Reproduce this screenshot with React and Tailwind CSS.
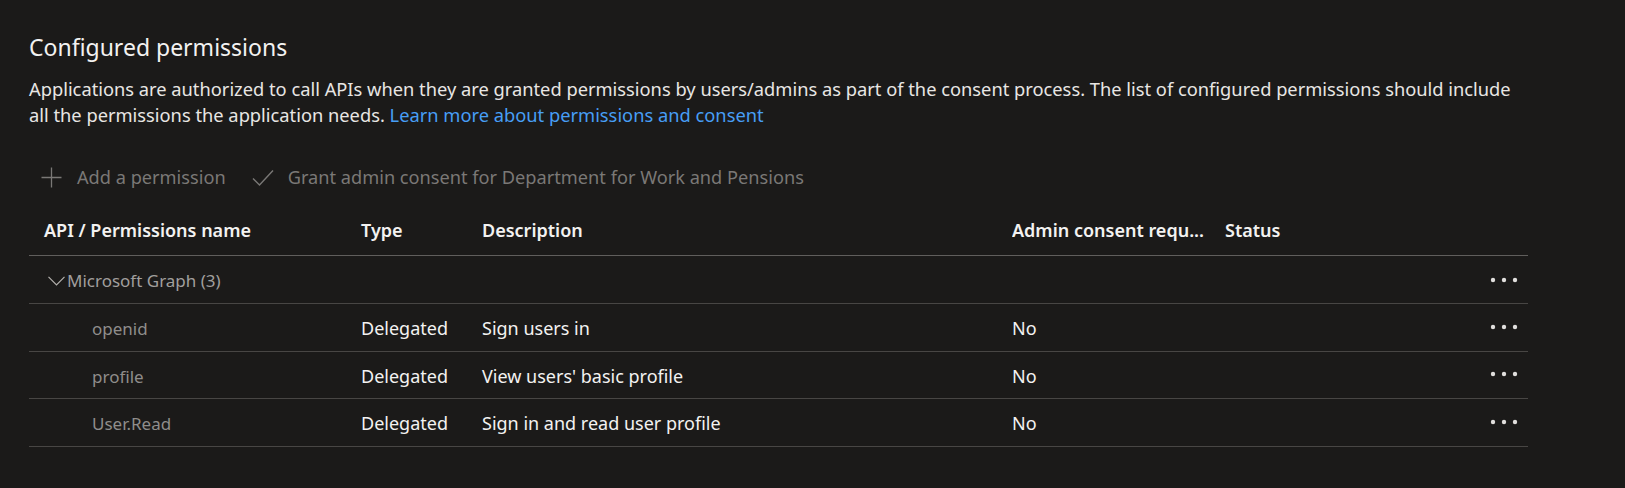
import React from 'react';

const font = { fontFamily: '"Noto Sans", "Open Sans", sans-serif' };

function Dots() {
  return (
    <svg width="28" height="6" viewBox="0 0 28 6" className="text-[#e1dfdd]">
      <circle cx="3" cy="3" r="2.2" fill="currentColor" />
      <circle cx="14" cy="3" r="2.2" fill="currentColor" />
      <circle cx="25" cy="3" r="2.2" fill="currentColor" />
    </svg>
  );
}

const rows = [
  { name: 'openid', type: 'Delegated', desc: 'Sign users in', admin: 'No' },
  { name: 'profile', type: 'Delegated', desc: "View users' basic profile", admin: 'No' },
  { name: 'User.Read', type: 'Delegated', desc: 'Sign in and read user profile', admin: 'No' },
];

const grid = 'grid grid-cols-[332px_121px_530px_213px_1fr_48px] items-center';

export default function App() {
  return (
    <div className="min-h-[488px] w-full bg-[#1b1a19] text-[#f3f2f1] pl-[29px] pr-[97px] pt-[31px]" style={font}>
      {/* Title */}
      <h2 className="text-[23px] leading-[32px] text-[#f3f2f1]">Configured permissions</h2>

      {/* Description */}
      <p className="mt-[13px] text-[18.3px] leading-[26px] text-[#e8e6e4]">
        Applications are authorized to call APIs when they are granted permissions by users/admins as part of the consent process. The list of configured permissions should include
        <br />
        all the permissions the application needs.{' '}
        <span className="text-[#479ef5]">Learn more about permissions and consent</span>
      </p>

      {/* Toolbar */}
      <div className="mt-[34px] flex h-[32px] items-center text-[18.2px] text-[#7a7876]">
        <div className="flex items-center pl-[12px]">
          <svg width="21" height="21" viewBox="0 0 21 21" className="mr-[15px]">
            <path d="M10.5 0.5v20M0.5 10.5h20" stroke="currentColor" strokeWidth="1.3" fill="none" />
          </svg>
          <span>Add a permission</span>
        </div>
        <div className="ml-[26px] flex items-center">
          <svg width="22" height="18" viewBox="0 0 22 18" className="mr-[14px]">
            <path d="M1 9.5l6.5 6.5L21 1.5" stroke="currentColor" strokeWidth="1.4" fill="none" />
          </svg>
          <span>Grant admin consent for Department for Work and Pensions</span>
        </div>
      </div>

      {/* Table */}
      <div className="mt-[12px] text-[18px]">
        <div className={`${grid} h-[50px] border-b border-[#605e5c] font-semibold text-[#f3f2f1]`}>
          <div className="pl-[15px]">API / Permissions name</div>
          <div>Type</div>
          <div>Description</div>
          <div className="truncate">Admin consent requ...</div>
          <div>Status</div>
          <div />
        </div>

        <div className={`${grid} h-[48px] border-b border-[#484644]`}>
          <div className="flex items-center pl-[19px] pt-[3px] text-[17px] text-[#a19f9d]">
            <svg width="17" height="10" viewBox="0 0 17 10" className="mr-[2px]">
              <path d="M0.5 0.8l8 8 8-8" stroke="#b3b0ad" strokeWidth="1.2" fill="none" />
            </svg>
            <span>Microsoft Graph (3)</span>
          </div>
          <div />
          <div />
          <div />
          <div />
          <div className="flex justify-center"><Dots /></div>
        </div>

        {rows.map(r => (
          <div key={r.name} className={`${grid} h-[47.5px] border-b border-[#484644] pt-[3px]`}>
            <div className="pl-[63px] text-[17px] text-[#8f8d8b]">{r.name}</div>
            <div className="text-[#f3f2f1]">{r.type}</div>
            <div className="text-[#f3f2f1]">{r.desc}</div>
            <div className="text-[#f3f2f1]">{r.admin}</div>
            <div />
            <div className="flex justify-center pb-[4px]"><Dots /></div>
          </div>
        ))}
      </div>
    </div>
  );
}
